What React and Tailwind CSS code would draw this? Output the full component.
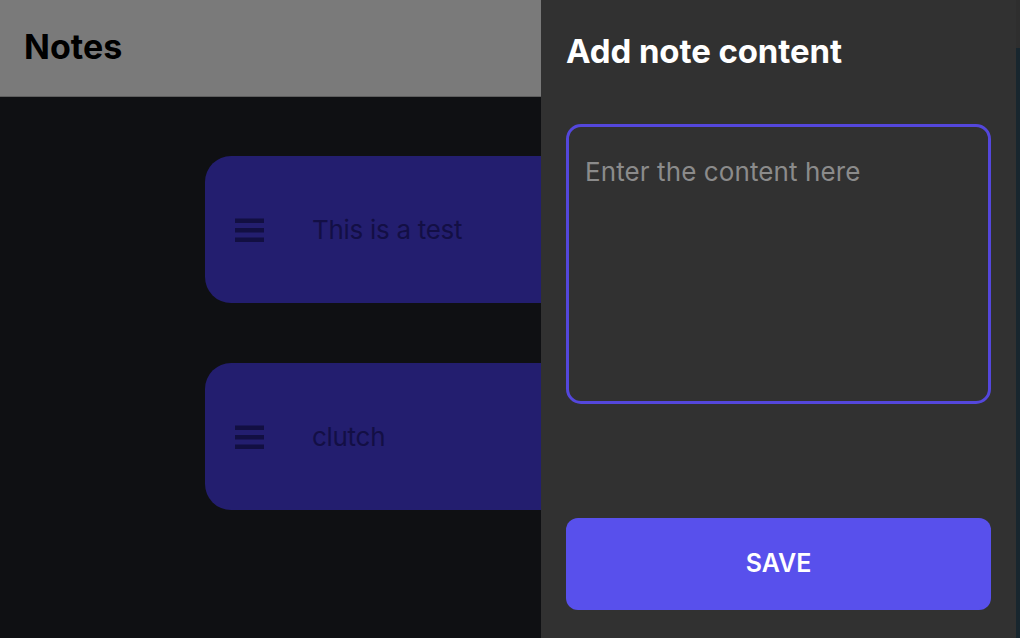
import React from "react";

function MenuIcon() {
  return (
    <svg width="29" height="24" viewBox="0 0 29 24" className="shrink-0">
      <rect x="0" y="0.5" width="29" height="4.5" fill="#120f42" />
      <rect x="0" y="10" width="29" height="4.5" fill="#120f42" />
      <rect x="0" y="19.5" width="29" height="4.5" fill="#120f42" />
    </svg>
  );
}

function Card({ text }) {
  return (
    <div className="ml-[205px] w-[610px] h-[147px] rounded-[26px] bg-[#231e6f] flex items-center pl-[30px]">
      <MenuIcon />
      <span className="ml-[48px] text-[26px] text-[#130f45] tracking-[-0.3px]">{text}</span>
    </div>
  );
}

export default function App() {
  return (
    <div
      className="relative w-[1020px] h-[638px] overflow-hidden bg-[#0f1013]"
      style={{ fontFamily: "Inter, 'DejaVu Sans', sans-serif" }}
    >
      <header className="h-[97px] bg-[#7a7a7a] border-b border-[#5e5e5e] flex items-center pl-[24px]">
        <h1 className="text-[34px] font-bold text-black -mt-[3px]">Notes</h1>
      </header>
      <div className="flex flex-col gap-[60px] pt-[59px]">
        <Card text="This is a test" />
        <Card text="clutch" />
      </div>

      <aside className="absolute top-0 right-0 h-full w-[479px] flex">
        <div className="flex-1 bg-[#313131] flex flex-col px-[25px]">
          <h2 className="mt-[30px] text-[33px] font-bold text-white tracking-[-0.1px] leading-[42px]">
            Add note content
          </h2>
          <div className="mt-[52px] h-[280px] rounded-[15px] border-[3px] border-[#5447dc] px-[16px] pt-[25px]">
            <span className="text-[26px] text-[#8b8b8b] tracking-[0.1px]">Enter the content here</span>
          </div>
          <button className="mt-[114px] h-[92px] rounded-[12px] bg-[#5850ec] text-white text-[25px] font-semibold">
            SAVE
          </button>
        </div>
        <div className="w-[4px] flex flex-col">
          <div className="h-[48px] bg-[#2e2e2e]" />
          <div className="flex-1 bg-[#18262e]" />
        </div>
      </aside>
    </div>
  );
}
